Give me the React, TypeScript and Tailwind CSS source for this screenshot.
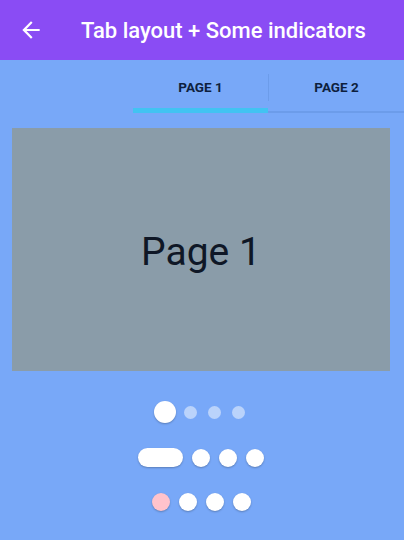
import { ReactNode } from 'react';

const Dot = ({ className }: { className: string }) => (
  <div className={`rounded-full shadow-[0_1px_2px_rgba(0,0,0,0.25)] ${className}`} />
);

function Row({ children, className }: { children: ReactNode; className: string }) {
  return <div className={`flex items-center justify-center ${className}`}>{children}</div>;
}

export default function App() {
  return (
    <div
      className="flex h-[540px] w-[404px] flex-col overflow-hidden bg-[#78a8f8]"
      style={{ fontFamily: 'Roboto, "Noto Sans", sans-serif' }}
    >
      {/* App bar */}
      <div className="flex h-[60px] shrink-0 items-center bg-[#8a4cf4] text-white">
        <svg viewBox="0 0 24 24" className="ml-[18px] h-[26px] w-[26px]" fill="currentColor">
          <path d="M20 11H7.83l5.59-5.59L12 4l-8 8 8 8 1.41-1.41L7.83 13H20v-2z" />
        </svg>
        <h1 className="ml-[37px] mt-[1px] text-[22px] font-medium">Tab layout + Some indicators</h1>
      </div>

      {/* Tabs */}
      <div className="ml-[133px] mt-[4px] flex h-[49px] border-b-2 border-[#6c9cea]">
        <div className="relative flex flex-1 items-center justify-center">
          <span className="text-[13.5px] font-bold text-[#0e1f3e]">PAGE 1</span>
          <div className="absolute -bottom-[2px] left-0 right-0 h-[5px] bg-[#42c3f2]" />
        </div>
        <div className="my-[10px] w-px bg-[#6c9cea]" />
        <div className="flex flex-1 items-center justify-center">
          <span className="text-[13.5px] font-bold text-[#0e1f3e]">PAGE 2</span>
        </div>
      </div>

      {/* Page content */}
      <div className="ml-[12px] mt-[15px] flex h-[243px] w-[378px] items-center justify-center bg-[#8a9ca9] pt-[5px]">
        <span className="text-[39px] text-[#0f1726]">Page 1</span>
      </div>

      {/* Indicators */}
      <Row className="mt-[30px] h-[22px] pr-[6px]">
        <Dot className="h-[22px] w-[22px] bg-white" />
        <Dot className="ml-[8px] h-[13px] w-[13px] bg-[#bad3fb] shadow-none" />
        <Dot className="ml-[11px] h-[13px] w-[13px] bg-[#bad3fb] shadow-none" />
        <Dot className="ml-[11px] h-[13px] w-[13px] bg-[#bad3fb] shadow-none" />
      </Row>
      <Row className="mt-[25px] h-[19px] pr-[3px]">
        <Dot className="h-[19px] w-[45px] bg-white" />
        <Dot className="ml-[9px] h-[18px] w-[18px] bg-white" />
        <Dot className="ml-[9px] h-[18px] w-[18px] bg-white" />
        <Dot className="ml-[9px] h-[18px] w-[18px] bg-white" />
      </Row>
      <Row className="mt-[26px] h-[18px] pr-[2px]">
        <Dot className="h-[18px] w-[18px] bg-[#ffc3cc]" />
        <Dot className="ml-[9px] h-[18px] w-[18px] bg-white" />
        <Dot className="ml-[9px] h-[18px] w-[18px] bg-white" />
        <Dot className="ml-[9px] h-[18px] w-[18px] bg-white" />
      </Row>
    </div>
  );
}
